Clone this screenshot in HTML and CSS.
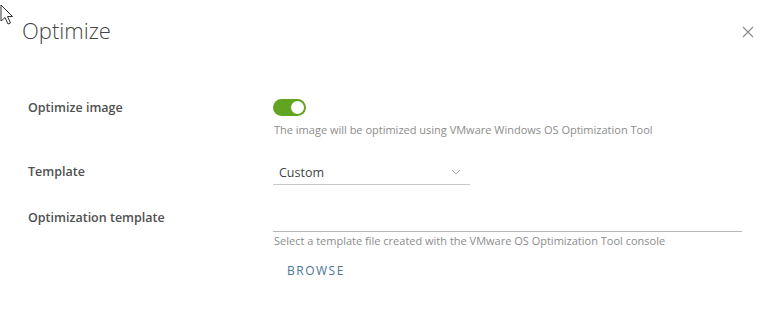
FILE: index.html
```html
<!DOCTYPE html>
<html>
<head>
<meta charset="utf-8">
<link rel="stylesheet" href="styles.css">
</head>
<body>
<div class="modal">
  <svg class="cursor" width="14" height="22" viewBox="0 0 14 22">
    <path d="M1 1 L1 17 L5 13.5 L8 20 L10.5 19 L7.5 12.5 L12.5 12.5 Z" fill="#fff" stroke="#333" stroke-width="1"/>
  </svg>
  <div class="header">
    <h1 class="title">Optimize</h1>
    <svg class="close" width="12" height="12" viewBox="0 0 12 12">
      <path d="M1 1 L11 11 M11 1 L1 11" stroke="#8a8a8a" stroke-width="1.2" fill="none"/>
    </svg>
  </div>
  <div class="form">
    <div class="row row-toggle">
      <div class="label">Optimize image</div>
      <div class="control">
        <div class="toggle"><div class="knob"></div></div>
        <div class="helper helper-toggle">The image will be optimized using VMware Windows OS Optimization Tool</div>
      </div>
    </div>
    <div class="row row-select">
      <div class="label">Template</div>
      <div class="control">
        <div class="select">
          <span>Custom</span>
          <svg width="10" height="6" viewBox="0 0 10 6"><path d="M1 1 L5 5 L9 1" stroke="#a8a8a8" stroke-width="1" fill="none"/></svg>
        </div>
      </div>
    </div>
    <div class="row row-file">
      <div class="label">Optimization template</div>
      <div class="control">
        <div class="input"></div>
        <div class="helper helper-file">Select a template file created with the VMware OS Optimization Tool console</div>
        <div class="browse">BROWSE</div>
      </div>
    </div>
  </div>
</div>
</body>
</html>
```
FILE: styles.css
```css
html, body {
  margin: 0;
  padding: 0;
  background: #fff;
  font-family: "Open Sans", "Liberation Sans", sans-serif;
  color: #333;
}
.modal {
  position: relative;
  width: 768px;
  height: 336px;
  overflow: hidden;
}
.cursor {
  position: absolute;
  left: 0;
  top: 4px;
}
.header {
  display: flex;
  align-items: center;
  justify-content: space-between;
  padding: 16px 14px 0 22px;
  height: 32px;
}
.title {
  margin: -4px 0 0 0;
  font-size: 22px;
  line-height: 28px;
  font-weight: 300;
  color: #444;
}
.form {
  padding: 51px 26px 0 28px;
}
.row {
  display: grid;
  grid-template-columns: 245px 1fr;
}
.label {
  font-size: 12.5px;
  line-height: 17px;
  font-weight: 600;
  color: #505050;
}
.toggle {
  width: 33px;
  height: 17px;
  border-radius: 9px;
  background: #62a420;
  position: relative;
}
.knob {
  position: absolute;
  right: 2px;
  top: 2px;
  width: 13px;
  height: 13px;
  border-radius: 50%;
  background: #fff;
}
.helper {
  font-size: 11px;
  line-height: 14px;
  color: #8c8c8c;
}
.helper-toggle {
  margin-top: 7px;
  padding-left: 1px;
}
.row-select {
  margin-top: 23px;
}
.row-select .label {
  line-height: 23px;
}
.select {
  width: 197px;
  height: 25px;
  border-bottom: 1px solid #c8c8c8;
  display: flex;
  align-items: center;
  justify-content: space-between;
  padding: 0 9px 0 6px;
  box-sizing: border-box;
  font-size: 12.5px;
  color: #454545;
}
.row-file {
  margin-top: 24px;
}
.input {
  height: 22px;
  border-bottom: 1px solid #b8b8b8;
}
.helper-file {
  margin-top: 2px;
  padding-left: 1px;
}
.browse {
  margin-top: 15px;
  margin-left: 14px;
  font-size: 12px;
  line-height: 16px;
  font-weight: 500;
  letter-spacing: 1.5px;
  color: #4a7596;
}
```
